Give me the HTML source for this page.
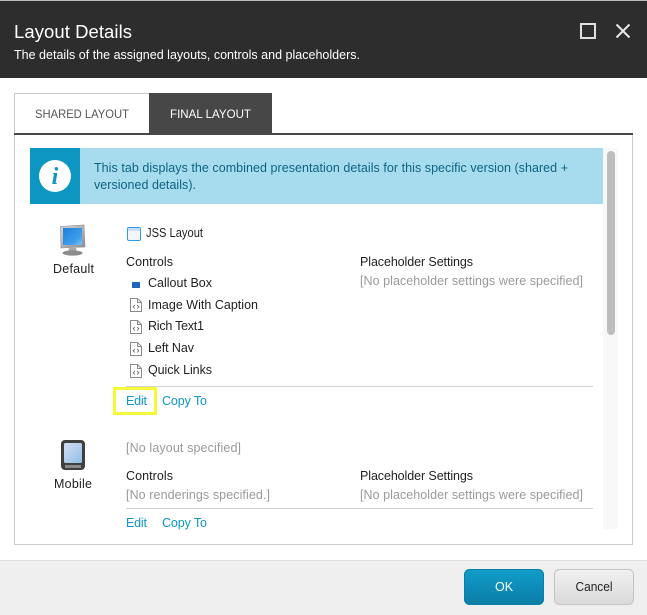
<!DOCTYPE html>
<html><head><meta charset="utf-8"><title>Layout Details</title>
<style>
html,body{margin:0;padding:0;width:647px;height:615px;overflow:hidden;background:#fff}
svg{display:block}
text{font-family:"Liberation Sans",sans-serif;font-size:12.5px;fill:#1f1f1f}
.g{fill:#9a9a9a}.l{fill:#0f96c4}
</style></head><body>
<svg width="647" height="615" viewBox="0 0 647 615" xmlns="http://www.w3.org/2000/svg">
<defs>
<linearGradient id="ok" x1="0" y1="0" x2="0" y2="1"><stop offset="0" stop-color="#119cc9"/><stop offset="1" stop-color="#0b7ea6"/></linearGradient>
<linearGradient id="cn" x1="0" y1="0" x2="0" y2="1"><stop offset="0" stop-color="#f1f1f1"/><stop offset="1" stop-color="#dadada"/></linearGradient>
<linearGradient id="scr" x1="0" y1="0" x2="1" y2="1"><stop offset="0" stop-color="#1f7fdc"/><stop offset=".7" stop-color="#3f9fec"/><stop offset="1" stop-color="#7cc4f4"/></linearGradient>
<linearGradient id="frm" x1="0" y1="0" x2="1" y2="1"><stop offset="0" stop-color="#d8d8d8"/><stop offset="1" stop-color="#8c8c8c"/></linearGradient>
<linearGradient id="mob" x1="0" y1="0" x2="1" y2="1"><stop offset="0" stop-color="#d5dcf0"/><stop offset="1" stop-color="#8fc0e8"/></linearGradient>
<g id="doc"><path d="M.5.5H7.500L11.500 4.500V13.500H.5Z" fill="#fff" stroke="#8a8a8a"/><path d="M7.500 .5V4.500H11.500" fill="none" stroke="#8a8a8a"/><path d="M4.800 7 3.200 8.800 4.800 10.500M7.200 7 8.800 8.800 7.200 10.500" fill="none" stroke="#666" stroke-width=".9"/></g>
</defs>
<rect width="647" height="615" fill="#fff"/>
<rect width="647" height="1" fill="#bdbdbd"/>
<rect y="1" width="647" height="77" fill="#2d2d2d"/>
<text x="14" y="38" textLength="118" style="font-size:18.500px;fill:#fff">Layout Details</text>
<text x="14" y="59" textLength="346" style="fill:#fff">The details of the assigned layouts, controls and placeholders.</text>
<rect x="581" y="24" width="14" height="14" fill="none" stroke="#e0e0e0" stroke-width="2"/>
<path d="M616.500 24.500 629.500 37.500M629.500 24.500 616.500 37.500" stroke="#e8e8e8" stroke-width="2" fill="none"/>

<rect x="14.500" y="93.500" width="618" height="451" fill="#fff" stroke="#cbcbcb"/>
<rect x="633" y="93" width="14" height="40" fill="#fff"/>
<rect x="272" y="92" width="375" height="41" fill="#fff"/>
<rect x="149" y="93" width="123" height="40" fill="#474747"/>
<rect x="14" y="133" width="619" height="2" fill="#474747"/>
<text x="35" y="118" textLength="94" lengthAdjust="spacingAndGlyphs" style="font-size:12px;fill:#555">SHARED LAYOUT</text>
<text x="170" y="118" textLength="81" lengthAdjust="spacingAndGlyphs" style="font-size:12px;fill:#fff">FINAL LAYOUT</text>

<rect x="30" y="148" width="573" height="56" fill="#a7dbee"/>
<rect x="30" y="148" width="50" height="56" fill="#0e96c2"/>
<circle cx="55" cy="176" r="16" fill="#fff"/>
<text x="55" y="184" text-anchor="middle" style="font-family:'Liberation Serif',serif;font-size:24px;font-weight:bold;font-style:italic;fill:#0e96c2">i</text>
<text x="94" y="172" textLength="474" style="fill:#0d6483">This tab displays the combined presentation details for this specific version (shared +</text>
<text x="94" y="189" textLength="102" style="fill:#0d6483">versioned details).</text>

<rect x="603" y="148" width="15" height="381" fill="#f8f8f8"/>
<rect x="607" y="151" width="8" height="184" rx="4" fill="#bdbdbd"/>

<!-- monitor -->
<path d="M60.500 226.500 84 225 85 247 61 248Z" fill="url(#frm)" stroke="#8e8e8e" stroke-width=".6"/>
<rect x="63" y="228" width="19" height="17" fill="url(#scr)"/>
<path d="M69 248H76L77 252H68Z" fill="#a8a8a8"/>
<ellipse cx="72.500" cy="253" rx="10" ry="2.600" fill="#8c8c8c"/>
<text x="53" y="273" textLength="41">Default</text>

<rect x="127.500" y="227.500" width="13" height="13" rx="1.500" fill="#f4f4fb" stroke="#3097f0"/>
<rect x="128" y="228" width="12" height="3" fill="#c6def8"/>
<text x="146" y="237" textLength="57" lengthAdjust="spacingAndGlyphs">JSS Layout</text>
<text x="126" y="266" textLength="47">Controls</text>
<text x="360" y="266" textLength="113">Placeholder Settings</text>
<text x="360" y="285" textLength="223" class="g">[No placeholder settings were specified]</text>

<rect x="132" y="282" width="8" height="6" fill="#1f62c0"/>
<text x="148" y="287" textLength="64">Callout Box</text>
<use href="#doc" x="130" y="298"/>
<text x="148" y="309" textLength="110">Image With Caption</text>
<use href="#doc" x="130" y="320"/>
<text x="148" y="330" textLength="56">Rich Text1</text>
<use href="#doc" x="130" y="342"/>
<text x="148" y="352" textLength="46">Left Nav</text>
<use href="#doc" x="130" y="364"/>
<text x="148" y="374" textLength="64">Quick Links</text>

<rect x="126" y="386" width="467" height="1" fill="#d2d2d2"/>
<rect x="114.500" y="388.500" width="41" height="25" fill="none" stroke="#f8f83a" stroke-width="3"/>
<text x="126" y="405" textLength="21" class="l">Edit</text>
<text x="162" y="405" textLength="45" class="l">Copy To</text>

<!-- mobile -->
<rect x="61" y="440" width="24" height="30" rx="4" fill="#3f3f3f"/>
<rect x="64" y="443" width="18" height="20" rx="1.500" fill="url(#mob)"/>
<rect x="65" y="465" width="16" height="3" fill="#8a8a8a"/>
<text x="54" y="488" textLength="38">Mobile</text>

<text x="126" y="452" textLength="115" class="g">[No layout specified]</text>
<text x="126" y="480" textLength="47">Controls</text>
<text x="360" y="480" textLength="113">Placeholder Settings</text>
<text x="126" y="499" textLength="144" class="g">[No renderings specified.]</text>
<text x="360" y="499" textLength="223" class="g">[No placeholder settings were specified]</text>
<rect x="126" y="508" width="467" height="1" fill="#d2d2d2"/>
<text x="126" y="527" textLength="21" class="l">Edit</text>
<text x="162" y="527" textLength="45" class="l">Copy To</text>

<rect y="560" width="647" height="55" fill="#efefef"/>
<rect y="560" width="647" height="1" fill="#e0e0e0"/>
<rect x="464.500" y="569.500" width="79" height="35" rx="5" fill="url(#ok)" stroke="#0c7fa6"/>
<text x="504" y="591" text-anchor="middle" style="fill:#fff">OK</text>
<rect x="554.500" y="569.500" width="79" height="35" rx="5" fill="url(#cn)" stroke="#c4c4c4"/>
<text x="575.500" y="591" textLength="37" lengthAdjust="spacingAndGlyphs">Cancel</text>
</svg>
</body></html>
